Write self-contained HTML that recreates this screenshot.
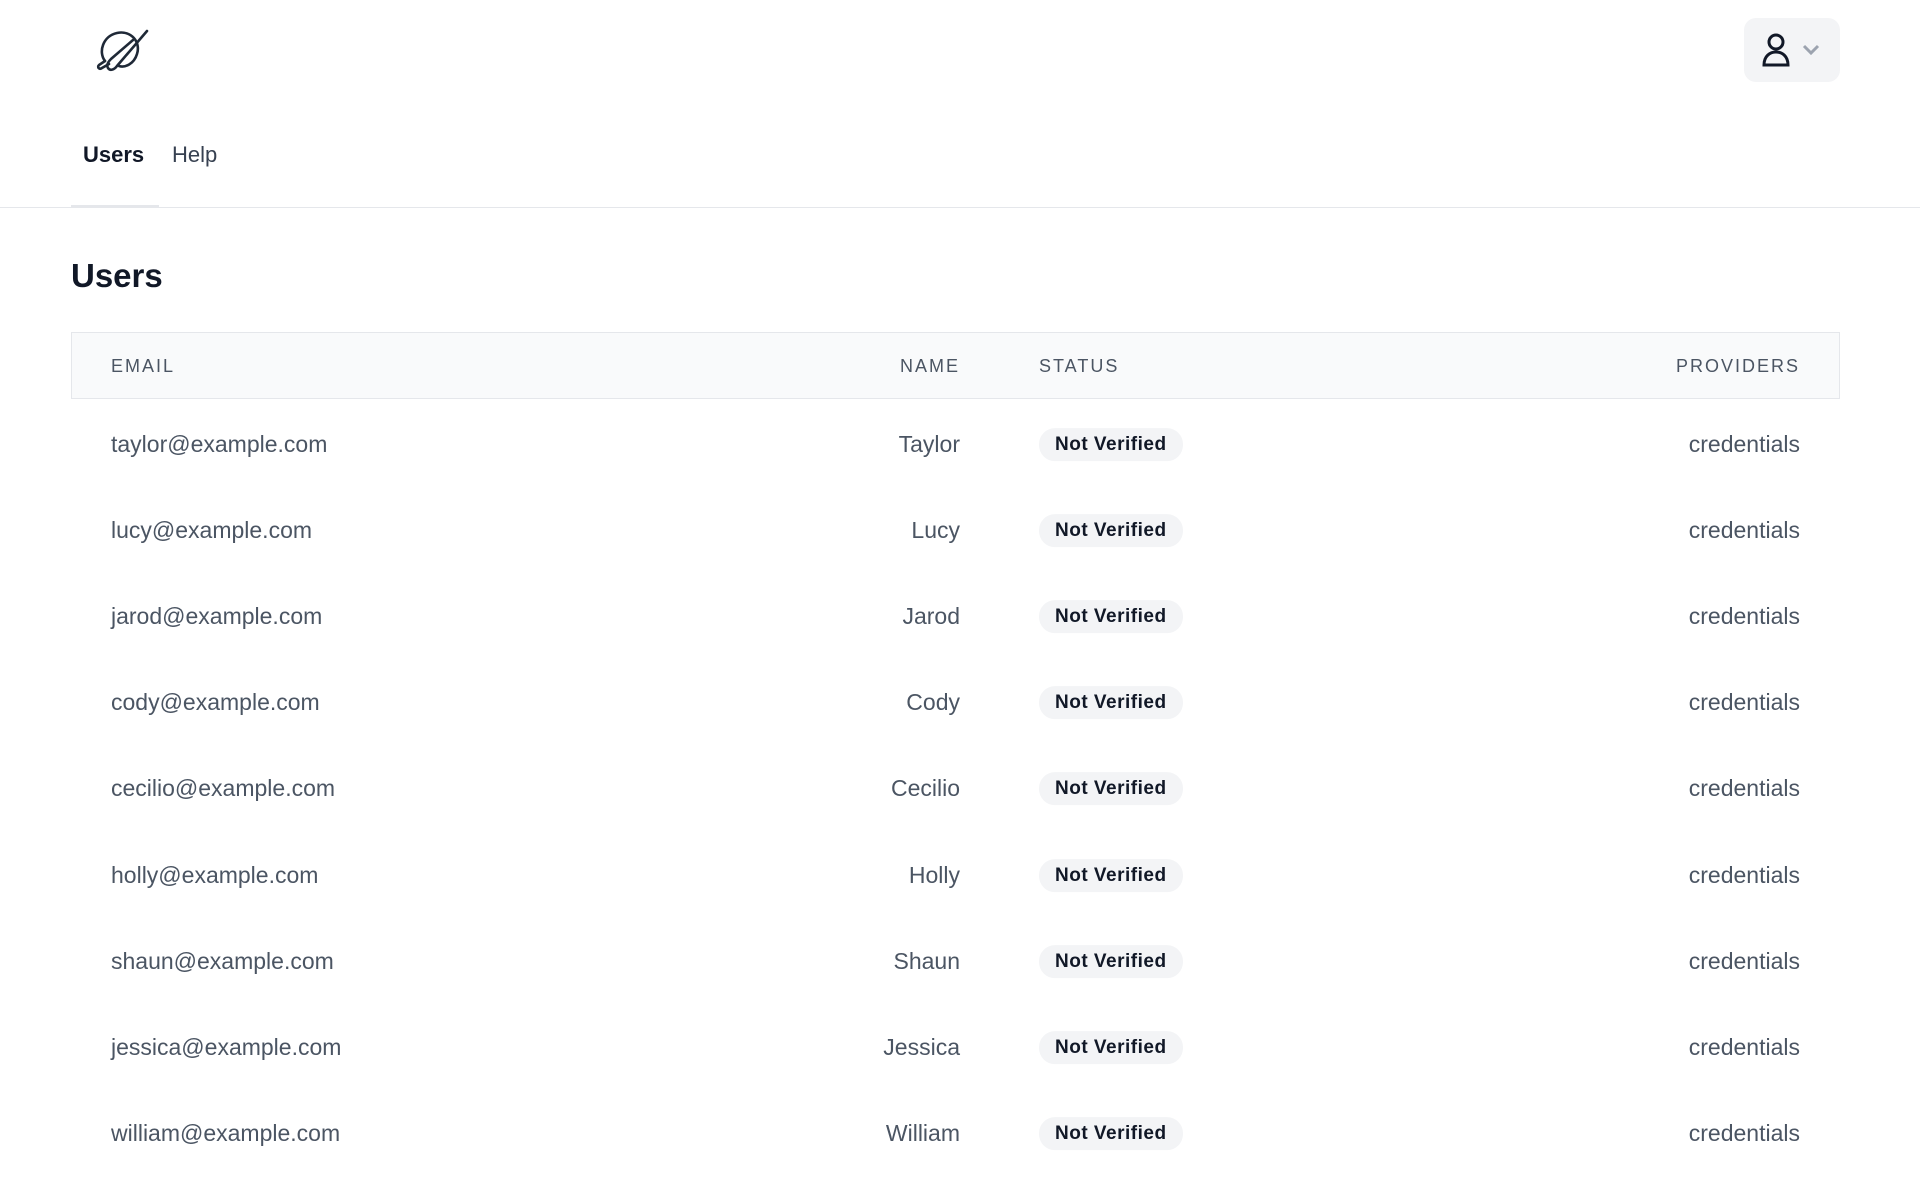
<!DOCTYPE html>
<html><head><meta charset="utf-8"><style>
*{box-sizing:border-box;margin:0;padding:0}
body{width:1920px;height:1192px;background:#fff;font-family:"Liberation Sans",Arial,sans-serif;color:#111827;overflow:hidden;position:relative}
.abs{position:absolute}
.nav{font-size:22px;top:142px}
.th{top:332px;left:71px;width:1769px;height:67px;background:#f9fafb;border:1px solid #e5e7eb}
.h{position:absolute;top:356px;font-size:18px;letter-spacing:2px;color:#4b5563;font-weight:400}
.row{position:absolute;left:0;width:1920px;height:86px;font-size:23px;color:#4b5563}
.row span{position:absolute;top:50%;transform:translateY(-48%)}
.badge{background:#f3f4f6;border-radius:16px;height:33px;line-height:33px;padding:0 16px;font-size:19px;font-weight:600;color:#111827;letter-spacing:.5px}
</style></head><body>
<svg class="abs" style="left:95px;top:28px" width="56" height="46" viewBox="0 0 56 46" fill="none" stroke="#1f2937" stroke-width="2.6" stroke-linecap="round">
<path d="M52 3 L22 38 C19 42 15 43 13 40 C11 37 13 34 16 31 L38 12"/>
<path d="M10 33 C3 24 8 8 22 5 C36 2 46 14 42 26 C39 36 30 40 24 38"/>
<path d="M10 33 L4 37 C2 39 4 42 7 40 L14 36"/>
</svg>
<div class="abs" style="left:1744px;top:18px;width:96px;height:64px;background:#f3f4f6;border-radius:12px"></div>
<svg class="abs" style="left:1760px;top:32px" width="34" height="36" viewBox="0 0 34 36" fill="none" stroke="#111827" stroke-width="3">
<circle cx="16" cy="10" r="7"/><path d="M4 33 C4 24 10 20 16 20 C22 20 28 24 28 33 Z"/></svg>
<svg class="abs" style="left:1802px;top:44px" width="18" height="12" viewBox="0 0 18 12" fill="none" stroke="#9ca3af" stroke-width="3"><path d="M2 2 L9 9 L16 2"/></svg>
<div class="abs nav" style="left:83px;font-weight:600">Users</div>
<div class="abs nav" style="left:172px;color:#374151">Help</div>
<div class="abs" style="left:71px;top:205px;width:88px;height:2px;background:#e5e7eb"></div>
<div class="abs" style="left:0;top:207px;width:1920px;height:1px;background:#e5e7eb"></div>
<div class="abs" style="left:71px;top:257px;font-size:33px;font-weight:700">Users</div>
<div class="abs th"></div>
<div class="h" style="left:111px">EMAIL</div>
<div class="h" style="right:960px">NAME</div>
<div class="h" style="left:1039px">STATUS</div>
<div class="h" style="right:120px">PROVIDERS</div>
<div class="row" style="top:401px"><span style="left:111px">taylor@example.com</span><span style="right:960px">Taylor</span><span class="badge" style="left:1039px">Not Verified</span><span style="right:120px">credentials</span></div>
<div class="row" style="top:487px"><span style="left:111px">lucy@example.com</span><span style="right:960px">Lucy</span><span class="badge" style="left:1039px">Not Verified</span><span style="right:120px">credentials</span></div>
<div class="row" style="top:573px"><span style="left:111px">jarod@example.com</span><span style="right:960px">Jarod</span><span class="badge" style="left:1039px">Not Verified</span><span style="right:120px">credentials</span></div>
<div class="row" style="top:659px"><span style="left:111px">cody@example.com</span><span style="right:960px">Cody</span><span class="badge" style="left:1039px">Not Verified</span><span style="right:120px">credentials</span></div>
<div class="row" style="top:745px"><span style="left:111px">cecilio@example.com</span><span style="right:960px">Cecilio</span><span class="badge" style="left:1039px">Not Verified</span><span style="right:120px">credentials</span></div>
<div class="row" style="top:832px"><span style="left:111px">holly@example.com</span><span style="right:960px">Holly</span><span class="badge" style="left:1039px">Not Verified</span><span style="right:120px">credentials</span></div>
<div class="row" style="top:918px"><span style="left:111px">shaun@example.com</span><span style="right:960px">Shaun</span><span class="badge" style="left:1039px">Not Verified</span><span style="right:120px">credentials</span></div>
<div class="row" style="top:1004px"><span style="left:111px">jessica@example.com</span><span style="right:960px">Jessica</span><span class="badge" style="left:1039px">Not Verified</span><span style="right:120px">credentials</span></div>
<div class="row" style="top:1090px"><span style="left:111px">william@example.com</span><span style="right:960px">William</span><span class="badge" style="left:1039px">Not Verified</span><span style="right:120px">credentials</span></div>
</body></html>
